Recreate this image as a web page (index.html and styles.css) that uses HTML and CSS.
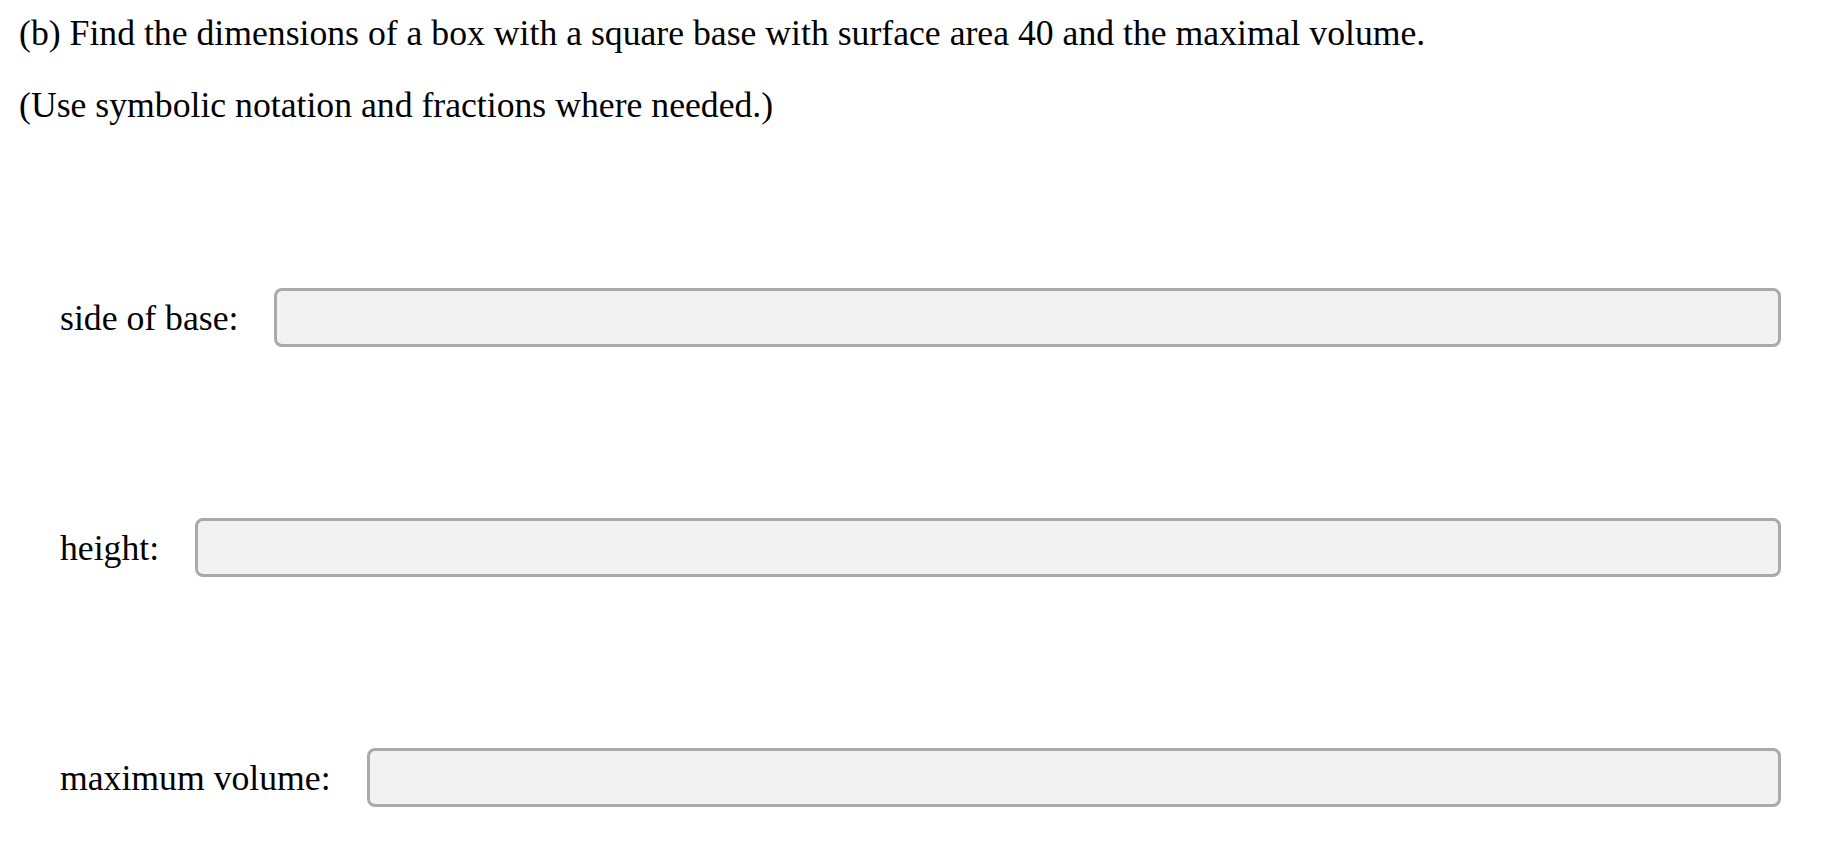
FILE: index.html
```html
<!DOCTYPE html>
<html>
<head>
<meta charset="utf-8">
<link rel="stylesheet" href="styles.css">
</head>
<body>
<div class="page">
  <div class="intro">
    <p class="line">(b) Find the dimensions of a box with a square base with surface area 40 and the maximal volume.</p>
    <p class="line">(Use symbolic notation and fractions where needed.)</p>
  </div>
  <div class="fields">
    <div class="row"><label class="label">side of base:</label><input class="answer" type="text"></div>
    <div class="row"><label class="label">height:</label><input class="answer" type="text"></div>
    <div class="row"><label class="label">maximum volume:</label><input class="answer" type="text"></div>
  </div>
</div>
</body>
</html>
```
FILE: styles.css
```css
html, body {
  margin: 0;
  padding: 0;
  background: #ffffff;
}
.page {
  padding: 0 53px 0 19px;
  font-family: "Liberation Serif", "Times New Roman", serif;
  font-size: 35.7px;
  color: #000;
}
.intro {
  margin-top: -3px;
}
.line {
  margin: 0;
  line-height: 72px;
}
.fields {
  display: flex;
  flex-direction: column;
  gap: 171px;
  padding-left: 41px;
  margin-top: 147px;
}
.row {
  display: flex;
  align-items: center;
  gap: 36px;
}
.label {
  white-space: nowrap;
}
.answer {
  flex: 1;
  height: 59px;
  box-sizing: border-box;
  border: 3px solid #aaaaaa;
  border-radius: 8px;
  background: #f2f2f2;
  outline: none;
  font: inherit;
}
```
